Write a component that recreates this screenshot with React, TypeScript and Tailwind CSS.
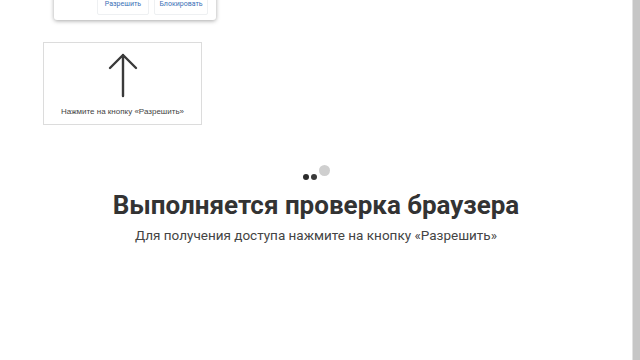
export default function App() {
  return (
    <div className="relative flex h-[360px] w-[640px] overflow-hidden bg-white font-['Roboto',sans-serif]">
      <main className="relative flex w-[632px] flex-col">
        {/* permission popup, cut off at the top */}
        <div className="absolute left-[54px] top-[-60px] flex h-[80px] w-[162px] items-end justify-end gap-[5px] rounded-b-[3px] bg-white px-[8px] pb-[5px] shadow-[0_1px_4px_rgba(0,0,0,0.35)]">
          <button className="h-[22px] w-[52px] rounded-[2px] border border-[#eef0f2] bg-white text-[7px] text-[#3b6fb6]">
            Разрешить
          </button>
          <button className="h-[22px] w-[54px] rounded-[2px] border border-[#eef0f2] bg-white text-[7px] text-[#3b6fb6]">
            Блокировать
          </button>
        </div>

        <div className="ml-[43px] mt-[42px] flex h-[83px] w-[159px] flex-col items-center border border-[#dcdcdc]">
          <svg width="30" height="46" viewBox="0 0 30 46" className="mt-[9px]" fill="none" stroke="#3a3a3a" strokeWidth="2.4" strokeLinecap="round" strokeLinejoin="round">
            <path d="M15 3v41M2 16L15 3l13 13" />
          </svg>
          <p className="mt-[8px] font-['Liberation_Sans',sans-serif] text-[8px] text-[#444]">Нажмите на кнопку «Разрешить»</p>
        </div>

        <div className="mt-[39px] flex h-[17px] items-end justify-center gap-[2px]">
          <span className="mb-[1px] h-[6px] w-[6px] rounded-full bg-[#2b2b2b]" />
          <span className="mb-[1px] h-[6px] w-[6px] rounded-full bg-[#3a3a3a]" />
          <span className="mb-[5px] h-[11px] w-[11px] rounded-full bg-[#cfcfcf]" />
        </div>

        <h1 className="mt-[8px] text-center text-[26px] font-bold leading-[32px] text-[#333]">
          Выполняется проверка браузера
        </h1>
        <p className="mt-[4px] text-center text-[13.5px] leading-[20px] text-[#444]">
          Для получения доступа нажмите на кнопку «Разрешить»
        </p>
      </main>
      <div className="h-full w-[8px] border-l border-[#e2e2e2] bg-[#c6c6c6]" />
    </div>
  );
}
